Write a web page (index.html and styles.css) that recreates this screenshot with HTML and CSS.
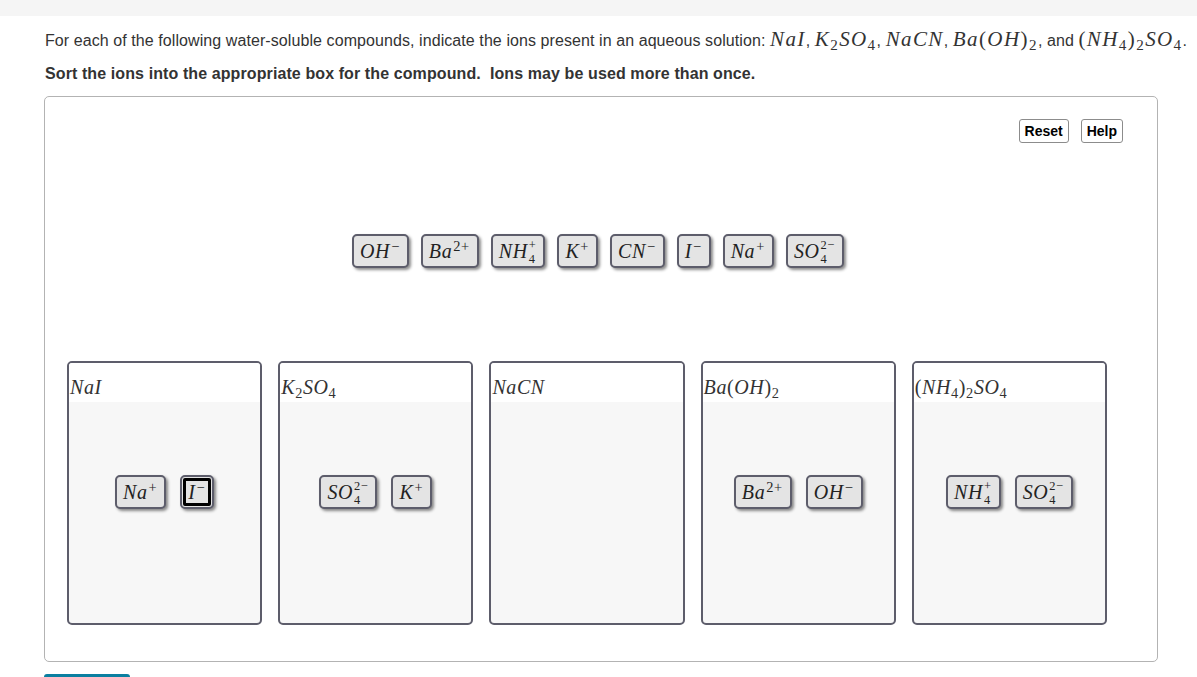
FILE: index.html
```html
<!DOCTYPE html>
<html>
<head>
<meta charset="utf-8">
<link rel="stylesheet" href="styles.css">
</head>
<body>
<div class="topbar"></div>
<div class="page">
  <p class="intro">For each of the following water-soluble compounds, indicate the ions present in an aqueous solution: <span class="m">NaI</span>, <span class="m">K<span class="sb">2</span>SO<span class="sb">4</span></span>, <span class="m">NaCN</span>, <span class="m">Ba<span class="n">(</span>OH<span class="n">)</span><span class="sb">2</span></span>, and <span class="m"><span class="n">(</span>NH<span class="sb">4</span><span class="n">)</span><span class="sb">2</span>SO<span class="sb">4</span></span>.</p>
  <p class="instr">Sort the ions into the appropriate box for the compound.&nbsp; Ions may be used more than once.</p>

  <div class="box">
    <div class="toolbar">
      <button class="btn">Reset</button>
      <button class="btn">Help</button>
    </div>

    <div class="pool">
      <span class="tile m">OH<span class="sp">−</span></span>
      <span class="tile m">Ba<span class="sp">2+</span></span>
      <span class="tile m">NH<span class="ss"><span class="ssup">+</span><span class="ssub">4</span></span></span>
      <span class="tile m">K<span class="sp">+</span></span>
      <span class="tile m">CN<span class="sp">−</span></span>
      <span class="tile m">I<span class="sp">−</span></span>
      <span class="tile m">Na<span class="sp">+</span></span>
      <span class="tile m">SO<span class="ss"><span class="ssup">2−</span><span class="ssub">4</span></span></span>
    </div>

    <div class="bins">
      <div class="bin">
        <div class="bin-head m">NaI</div>
        <div class="bin-body">
          <span class="tile m">Na<span class="sp">+</span></span>
          <span class="tile m selected">I<span class="sp">−</span></span>
        </div>
      </div>
      <div class="bin">
        <div class="bin-head m">K<span class="sb">2</span>SO<span class="sb">4</span></div>
        <div class="bin-body">
          <span class="tile m">SO<span class="ss"><span class="ssup">2−</span><span class="ssub">4</span></span></span>
          <span class="tile m">K<span class="sp">+</span></span>
        </div>
      </div>
      <div class="bin">
        <div class="bin-head m">NaCN</div>
        <div class="bin-body"></div>
      </div>
      <div class="bin">
        <div class="bin-head m">Ba<span class="n">(</span>OH<span class="n">)</span><span class="sb">2</span></div>
        <div class="bin-body">
          <span class="tile m">Ba<span class="sp">2+</span></span>
          <span class="tile m">OH<span class="sp">−</span></span>
        </div>
      </div>
      <div class="bin">
        <div class="bin-head m"><span class="n">(</span>NH<span class="sb">4</span><span class="n">)</span><span class="sb">2</span>SO<span class="sb">4</span></div>
        <div class="bin-body">
          <span class="tile m">NH<span class="ss"><span class="ssup">+</span><span class="ssub">4</span></span></span>
          <span class="tile m">SO<span class="ss"><span class="ssup">2−</span><span class="ssub">4</span></span></span>
        </div>
      </div>
    </div>
  </div>

  <div class="submit"></div>
</div>
</body>
</html>
```

FILE: styles.css
```css
* { box-sizing: border-box; }

html, body { margin: 0; padding: 0; background: #fff; }

body {
  font-family: "Liberation Sans", Arial, sans-serif;
  color: #333;
  overflow: hidden;
}

.topbar {
  height: 16px;
  background: #f5f5f5;
}

.page {
  padding-left: 44px;
}

.intro {
  margin: 13px 0 0 1px;
  font-size: 16px;
  line-height: 20px;
  letter-spacing: 0.08px;
}

.instr {
  margin: 14px 0 0 1px;
  font-size: 16px;
  font-weight: bold;
  line-height: 18px;
  letter-spacing: 0.1px;
}

/* math */
.m {
  font-family: "Liberation Serif", "Times New Roman", serif;
  font-style: italic;
  font-size: 20px;
  letter-spacing: 0.6px;
  line-height: 1;
}
.intro .m { font-size: 21px; letter-spacing: 1.4px; }
.n { font-style: normal; }
.sb {
  font-style: normal;
  font-size: 0.72em;
  vertical-align: -0.25em;
  line-height: 0;
}
.sp {
  font-style: normal;
  font-size: 0.72em;
  vertical-align: 0.5em;
  line-height: 0;
  margin-left: 1px;
}
.ss {
  display: inline-block;
  font-style: normal;
  font-size: 0.62em;
  line-height: 1.1;
  vertical-align: -0.4em;
  margin-left: 1px;
  text-align: left;
}
.ssup, .ssub { display: block; }

/* box */
.box {
  margin-top: 13px;
  width: 1114px;
  height: 566px;
  border: 1px solid #b3b3b3;
  border-radius: 5px;
  padding-top: 22px;
}

.toolbar {
  display: flex;
  justify-content: flex-end;
  gap: 12px;
  padding-right: 34px;
}

.btn {
  height: 24px;
  padding: 0 5px;
  font-family: "Liberation Sans", Arial, sans-serif;
  font-weight: bold;
  font-size: 14px;
  color: #000;
  background: #fff;
  border: 1px solid #8c8c8c;
  border-radius: 3px;
}

.pool {
  margin-top: 91px;
  display: flex;
  justify-content: center;
  gap: 12px;
  padding-right: 6px;
}

.tile {
  display: inline-block;
  height: 34px;
  line-height: 30px;
  padding: 0 7px 0 6px;
  background: #e4e4e4;
  border: 2px solid #5d5d6b;
  border-radius: 5px;
  box-shadow: 2px 2px 3px rgba(0, 0, 0, 0.45);
  color: #222;
  white-space: nowrap;
  overflow: hidden;
}

.tile.selected {
  outline: 3px solid #000;
  outline-offset: -6px;
}

.bins {
  margin: 93px 0 0 22px;
  width: 1040px;
  display: grid;
  grid-template-columns: repeat(5, 1fr);
  gap: 16px;
}

.bin {
  height: 264px;
  border: 2px solid #5d5d6b;
  border-radius: 5px;
  background: #f7f7f7;
  display: flex;
  flex-direction: column;
  overflow: hidden;
}

.bin-head {
  height: 39px;
  background: #fff;
  padding: 10px 0 0 1px;
  line-height: 29px;
  color: #333;
}

.bin-body {
  padding-top: 73px;
  display: flex;
  justify-content: center;
  gap: 14px;
}

.submit {
  margin-top: 12px;
  width: 86px;
  height: 10px;
  background: #0a7fa0;
  border-radius: 3px 3px 0 0;
}
```
